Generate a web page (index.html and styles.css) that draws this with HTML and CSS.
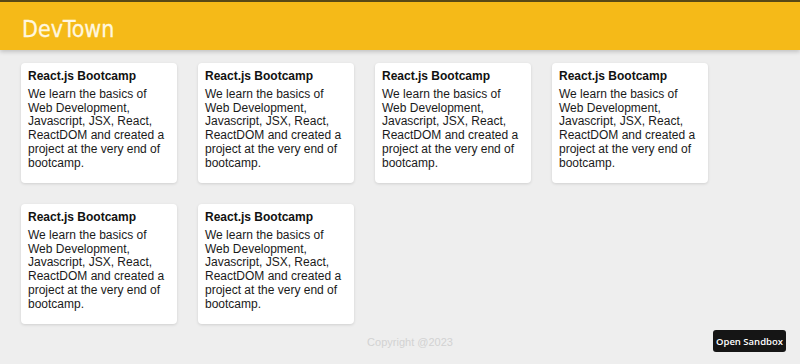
FILE: index.html
```html
<!DOCTYPE html>
<html lang="en">
<head>
<meta charset="utf-8">
<title>DevTown</title>
<link rel="stylesheet" href="styles.css">
</head>
<body>
<header class="topbar">
  <h1 class="brand">DevTown</h1>
</header>
<main class="cards">
  <div class="card"><h3 class="card-title">React.js Bootcamp</h3><p class="card-text">We learn the basics of Web Development, Javascript, JSX, React, ReactDOM and created a project at the very end of bootcamp.</p></div>
  <div class="card"><h3 class="card-title">React.js Bootcamp</h3><p class="card-text">We learn the basics of Web Development, Javascript, JSX, React, ReactDOM and created a project at the very end of bootcamp.</p></div>
  <div class="card"><h3 class="card-title">React.js Bootcamp</h3><p class="card-text">We learn the basics of Web Development, Javascript, JSX, React, ReactDOM and created a project at the very end of bootcamp.</p></div>
  <div class="card"><h3 class="card-title">React.js Bootcamp</h3><p class="card-text">We learn the basics of Web Development, Javascript, JSX, React, ReactDOM and created a project at the very end of bootcamp.</p></div>
  <div class="card"><h3 class="card-title">React.js Bootcamp</h3><p class="card-text">We learn the basics of Web Development, Javascript, JSX, React, ReactDOM and created a project at the very end of bootcamp.</p></div>
  <div class="card"><h3 class="card-title">React.js Bootcamp</h3><p class="card-text">We learn the basics of Web Development, Javascript, JSX, React, ReactDOM and created a project at the very end of bootcamp.</p></div>
</main>
<footer class="footer">Copyright @2023</footer>
<a class="sandbox-btn">Open Sandbox</a>
</body>
</html>
```
FILE: styles.css
```css
html, body {
  margin: 0;
  padding: 0;
}
body {
  background: #eeeeee;
  font-family: "Liberation Sans", Arial, sans-serif;
  height: 364px;
  overflow: hidden;
  position: relative;
}
.topbar {
  height: 48px;
  border-top: 2px solid #574816;
  background: #f5ba18;
  box-shadow: 0 2px 4px rgba(0, 0, 0, 0.18);
  display: flex;
  align-items: center;
  padding-left: 22px;
}
.brand {
  margin: 0;
  font-family: "DejaVu Sans Condensed", "DejaVu Sans", sans-serif;
  font-stretch: condensed;
  font-weight: normal;
  font-size: 23px;
  color: #fff7df;
  letter-spacing: 0;
  padding-top: 5px;
  -webkit-text-stroke: 0.3px #fff7df;
}
.cards {
  display: grid;
  grid-template-columns: repeat(4, 156px);
  gap: 21px;
  padding: 13px 21px 0;
}
.card {
  background: #ffffff;
  border-radius: 4px;
  box-shadow: 0 1px 3px rgba(0, 0, 0, 0.13);
  height: 120px;
  box-sizing: border-box;
  padding: 7px 7px 12px;
}
.card-title {
  margin: 0 0 4px;
  font-size: 12px;
  font-weight: bold;
  color: #111111;
  line-height: 13.8px;
}
.card-text {
  margin: 0;
  font-size: 12px;
  line-height: 13.8px;
  color: #1a1a1a;
}
.footer {
  text-align: center;
  padding: 12px 0 0 20px;
  font-size: 11px;
  color: #d2d2d2;
}
.sandbox-btn {
  position: absolute;
  right: 14px;
  bottom: 12px;
  width: 73px;
  height: 22px;
  background: #151515;
  border-radius: 3px;
  color: #ffffff;
  font-family: "Open Sans", sans-serif;
  font-weight: 600;
  font-size: 9.5px;
  display: flex;
  align-items: center;
  justify-content: center;
}
```
